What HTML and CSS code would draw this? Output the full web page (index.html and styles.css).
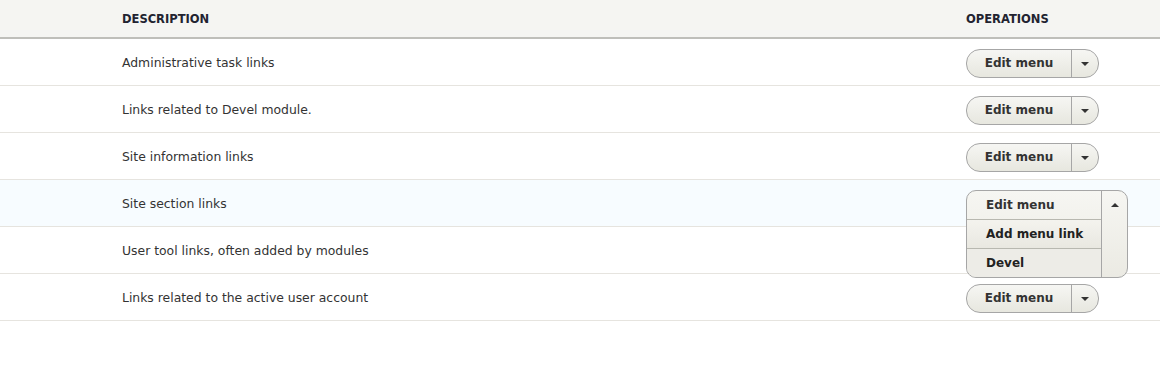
FILE: index.html
```html
<!DOCTYPE html>
<html lang="en">
<head>
    <meta charset="UTF-8">
    <title>Menus</title>
    <link rel="stylesheet" href="styles.css">
</head>
<body>
    <table class="menu-table">
        <thead>
            <tr>
                <th class="col-title"></th>
                <th class="col-desc">Description</th>
                <th class="col-ops">Operations</th>
            </tr>
        </thead>
        <tbody>
            <tr>
                <td></td>
                <td>Administrative task links</td>
                <td>
                    <div class="dropbutton">
                        <a class="dropbutton-action" href="#">Edit menu</a>
                        <span class="dropbutton-toggle"><span class="arrow down"></span></span>
                    </div>
                </td>
            </tr>
            <tr>
                <td></td>
                <td>Links related to Devel module.</td>
                <td>
                    <div class="dropbutton">
                        <a class="dropbutton-action" href="#">Edit menu</a>
                        <span class="dropbutton-toggle"><span class="arrow down"></span></span>
                    </div>
                </td>
            </tr>
            <tr>
                <td></td>
                <td>Site information links</td>
                <td>
                    <div class="dropbutton">
                        <a class="dropbutton-action" href="#">Edit menu</a>
                        <span class="dropbutton-toggle"><span class="arrow down"></span></span>
                    </div>
                </td>
            </tr>
            <tr class="is-hover">
                <td></td>
                <td>Site section links</td>
                <td class="has-open">
                    <div class="dropbutton open">
                        <ul class="dropbutton-list">
                            <li><a href="#">Edit menu</a></li>
                            <li class="secondary"><a href="#">Add menu link</a></li>
                            <li class="secondary last"><a href="#">Devel</a></li>
                        </ul>
                        <span class="dropbutton-toggle"><span class="arrow up"></span></span>
                    </div>
                </td>
            </tr>
            <tr>
                <td></td>
                <td>User tool links, often added by modules</td>
                <td></td>
            </tr>
            <tr>
                <td></td>
                <td>Links related to the active user account</td>
                <td>
                    <div class="dropbutton">
                        <a class="dropbutton-action" href="#">Edit menu</a>
                        <span class="dropbutton-toggle"><span class="arrow down"></span></span>
                    </div>
                </td>
            </tr>
        </tbody>
    </table>
</body>
</html>
```

FILE: styles.css
```css
body {
    margin: 0;
    background: #fff;
    font-family: "DejaVu Sans", "Noto Sans", sans-serif;
    font-size: 12.4px;
    color: #333;
}

.menu-table {
    width: 100%;
    border-collapse: collapse;
}

.menu-table th {
    height: 38px;
    padding: 0;
    background: #f5f5f2;
    border-bottom: 2px solid #bfbfba;
    text-align: left;
    text-transform: uppercase;
    font-size: 11.5px;
    font-weight: bold;
    color: #222330;
    box-sizing: border-box;
    vertical-align: middle;
}

.col-title {
    width: 122px;
}

.col-ops {
    width: 194px;
}

.menu-table td {
    height: 46px;
    padding: 0;
    border-bottom: 1px solid #e6e4df;
    vertical-align: middle;
    color: #333;
}

.menu-table tr.is-hover td {
    background: #f7fcff;
}

.menu-table td.has-open {
    position: relative;
}

/* dropbutton */
.dropbutton {
    display: inline-flex;
    height: 29px;
    margin-top: 2px;
    box-sizing: border-box;
    border: 1px solid #a6a6a6;
    border-radius: 14px;
    background: linear-gradient(to bottom, #f6f6f3 0%, #e7e7df 100%);
    overflow: hidden;
}

.dropbutton-action {
    width: 104px;
    line-height: 27px;
    text-align: center;
    font-size: 12px;
    font-weight: bold;
    color: #333;
    text-decoration: none;
}

.dropbutton-toggle {
    width: 26px;
    border-left: 1px solid #a6a6a6;
    display: flex;
    align-items: center;
    justify-content: center;
}

.arrow {
    width: 0;
    height: 0;
    border-left: 4px solid transparent;
    border-right: 4px solid transparent;
}

.arrow.down {
    border-top: 4px solid #333;
    margin-top: 1px;
}

.arrow.up {
    border-bottom: 4px solid #333;
}

.dropbutton.open {
    position: absolute;
    left: 0;
    top: 10px;
    height: auto;
    margin-top: 0;
    border-radius: 10px;
    background: linear-gradient(to bottom, #f6f6f2 0%, #ebeae3 100%);
    z-index: 2;
}

.dropbutton.open .dropbutton-toggle {
    align-items: flex-start;
    padding-top: 12px;
    width: 26px;
    box-sizing: border-box;
}

.dropbutton-list {
    list-style: none;
    margin: 0;
    padding: 0;
    width: 134px;
}

.dropbutton-list li {
    height: 28px;
}

.dropbutton-list li.secondary {
    height: 29px;
    box-sizing: border-box;
    border-top: 1px solid #b8b8b0;
    background: linear-gradient(to bottom, #f4f3ee 0%, #e9e8e1 100%);
}

.dropbutton-list li.last {
    background: #edece7;
}

.dropbutton-list a {
    display: block;
    padding-left: 19px;
    line-height: 28px;
    font-size: 12px;
    font-weight: bold;
    color: #333;
    text-decoration: none;
}

.dropbutton-list li.secondary a {
    color: #222;
}
```
